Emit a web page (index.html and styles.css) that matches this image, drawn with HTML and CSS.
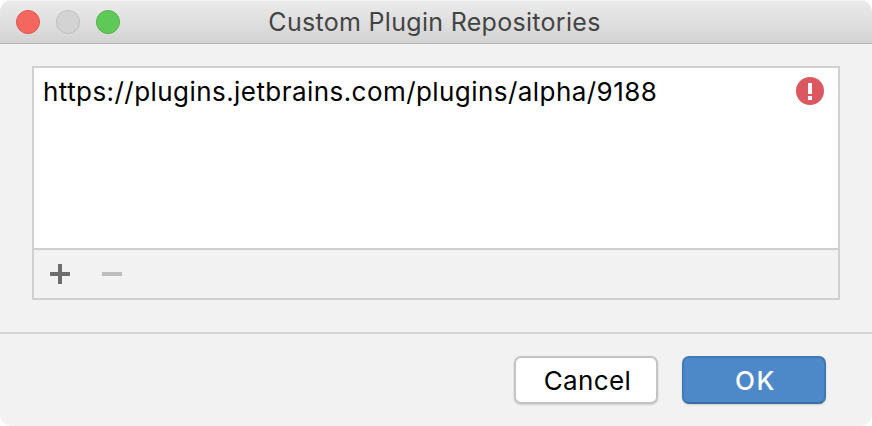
FILE: index.html
```html
<!DOCTYPE html>
<html>

	<head>
		<meta charset="UTF-8">
		<title>Custom Plugin Repositories</title>
		<link rel="stylesheet" href="styles.css">
	</head>

	<body>
		<div class="dialog">
			<div class="titlebar">
				<div class="lights">
					<span class="light red"></span>
					<span class="light grey"></span>
					<span class="light green"></span>
				</div>
				<div class="title">Custom Plugin Repositories</div>
			</div>
			<div class="content">
				<div class="panel">
					<div class="list">
						<span class="url">https://plugins.jetbrains.com/plugins/alpha/9188</span>
						<svg class="error" width="28" height="28" viewBox="0 0 28 28">
							<circle cx="14" cy="14" r="14" fill="#db5860"/>
							<rect x="12" y="6" width="4" height="11" fill="#fff"/>
							<rect x="12" y="19" width="4" height="4" fill="#fff"/>
						</svg>
					</div>
					<div class="toolbar">
						<svg class="tool" width="20" height="20" viewBox="0 0 20 20">
							<path d="M8 0h4v8h8v4h-8v8H8v-8H0V8h8z" fill="#6e6e6e"/>
						</svg>
						<svg class="tool" width="20" height="20" viewBox="0 0 20 20">
							<rect x="0" y="8" width="20" height="4" fill="#bdbdbd"/>
						</svg>
					</div>
				</div>
			</div>
			<div class="footer">
				<button class="btn">Cancel</button>
				<button class="btn primary">OK</button>
			</div>
		</div>
	</body>

</html>
```
FILE: styles.css
```css
html, body {
	height: 100%;
}

body {
	margin: 0;
	background: #fff;
	font-family: "Inter", "Liberation Sans", sans-serif;
}

.dialog {
	display: flex;
	flex-direction: column;
	height: 426px;
	box-sizing: border-box;
	overflow: hidden;
	background: #f2f2f2;
	border-radius: 12px;
}

.titlebar {
	display: flex;
	align-items: center;
	position: relative;
	height: 43px;
	background: linear-gradient(#ebebeb, #d3d3d3);
	border-bottom: 1px solid #b4b4b4;
	box-shadow: inset 0 1px 0 #f6f6f6;
}

.lights {
	display: flex;
	gap: 16px;
	padding-left: 16px;
}

.light {
	width: 24px;
	height: 24px;
	box-sizing: border-box;
	border-radius: 50%;
	border: 1px solid;
}

.red {
	background: #f4675e;
	border-color: #e2544c;
}

.grey {
	background: #d3d3d3;
	border-color: #bdbdbd;
}

.green {
	background: #5fc958;
	border-color: #50b04a;
}

.title {
	position: absolute;
	left: 0;
	right: 3px;
	text-align: center;
	font-size: 25px;
	letter-spacing: 0.3px;
	color: #444;
}

.content {
	flex: 1;
	padding: 22px 32px 32px;
	border-bottom: 2px solid #d4d4d4;
}

.panel {
	display: flex;
	flex-direction: column;
	height: 100%;
	box-sizing: border-box;
	border: 2px solid #d0d0d0;
}

.list {
	flex: 1;
	display: flex;
	justify-content: space-between;
	align-items: flex-start;
	padding: 8px 14px 0 9px;
	background: #fff;
	border-bottom: 2px solid #d0d0d0;
}

.url {
	font-size: 26px;
	line-height: 32px;
	letter-spacing: 0.44px;
	color: #000;
}

.error {
	margin-top: 1px;
}

.toolbar {
	display: flex;
	align-items: center;
	gap: 32px;
	height: 48px;
	padding-left: 16px;
}

.footer {
	display: flex;
	justify-content: flex-end;
	gap: 24px;
	height: 92px;
	box-sizing: border-box;
	padding: 22px 46px 0 0;
}

.btn {
	width: 144px;
	height: 48px;
	padding: 0 0 0 3px;
	font-family: inherit;
	font-size: 26px;
	letter-spacing: 0.4px;
	color: #000;
	background: #fff;
	border: 2px solid #c4c4c4;
	border-radius: 7px;
	box-shadow: 0 1px 2px rgba(0, 0, 0, 0.15);
}

.primary {
	font-weight: 500;
	letter-spacing: 1.5px;
	color: #fff;
	background: #4d89c9;
	border-color: #4279b5;
	border-bottom-color: #3a6ca6;
}
```
